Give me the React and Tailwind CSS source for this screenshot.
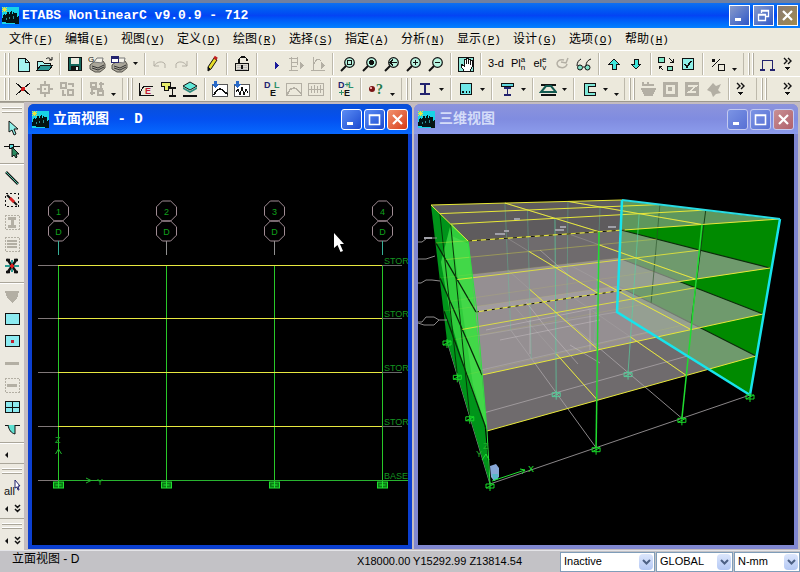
import React from "react";

const menus = [
  ["文件", "F"],
  ["编辑", "E"],
  ["视图", "V"],
  ["定义", "D"],
  ["绘图", "R"],
  ["选择", "S"],
  ["指定", "A"],
  ["分析", "N"],
  ["显示", "P"],
  ["设计", "G"],
  ["选项", "O"],
  ["帮助", "H"],
];

const K = "#111";
const C = "#5fe0d0";
const G = "#b3afa4";
const N = "#23236e";

function Ico({ children, size = 18 }) {
  return (
    <svg width={size} height={size} viewBox="0 0 18 18" fill="none" shapeRendering="crispEdges">
      {children}
    </svg>
  );
}

function Tool({ label, wide, children }) {
  return (
    <button
      aria-label={label}
      className={`${wide ? "w-6 justify-end" : "w-[22px] justify-center"} h-[22px] shrink-0 flex items-center`}
    >
      {children}
    </button>
  );
}

function Sep() {
  return (
    <div className="w-2 h-[22px] shrink-0 flex justify-center">
      <div className="w-0.5 border-l border-[#bdb9ab] bg-white" />
    </div>
  );
}

function Grip() {
  return (
    <div className="w-3 h-[22px] shrink-0 flex gap-0.5 pl-1">
      <div className="w-0.5 border-r border-[#b0ac9f] bg-white" />
      <div className="w-0.5 border-r border-[#b0ac9f] bg-white" />
    </div>
  );
}

function Drop({ low }) {
  return (
    <button aria-label="More" className={`w-[11px] h-[22px] shrink-0 flex justify-center ${low ? "items-end pb-1" : "items-center"}`}>
      <svg width="5" height="3" viewBox="0 0 5 3">
        <path d="M0 0h5L2.5 3z" fill={K} />
      </svg>
    </button>
  );
}

function More() {
  return (
    <button aria-label="More tools" className="w-5 h-[22px] shrink-0 flex items-center justify-center">
      <Ico>
        <path d="M3 3l3 3-3 3M7 3l3 3-3 3" stroke={K} strokeWidth="1.4" shapeRendering="auto" />
        <path d="M4 12h5l-2.500 3z" fill={K} />
      </Ico>
    </button>
  );
}

function Zoom({ children }) {
  return (
    <Ico>
      <path d="M7 11L2 16" stroke={K} strokeWidth="2" shapeRendering="auto" />
      <circle cx="10.500" cy="7.500" r="4.800" fill="#b8f4e0" stroke={K} strokeWidth="1.200" shapeRendering="auto" />
      {children}
    </Ico>
  );
}

function Printer({ children }) {
  return (
    <Ico>
      <path d="M2 10l5-4h8l2 3v4l-5 4H7l-5-3z" fill="#aaa69a" stroke="#55524a" shapeRendering="auto" />
      <path d="M6 7l3-4h6l-1 5z" fill="#f5f3ea" stroke="#777" shapeRendering="auto" />
      <path d="M4 11l6 2 6-3M4 13l6 2 6-3" stroke="#333" shapeRendering="auto" />
      {children}
    </Ico>
  );
}

function DLE({ plus }) {
  return (
    <svg width="20" height="20" viewBox="0 0 20 20" fontFamily="Liberation Sans" fontWeight="700" fontSize="9">
      <text x="2" y="9" fill={N}>D</text>
      <text x="12" y="9" fill="#2f8f6a">L</text>
      <text x="8" y="17" fill={K}>E</text>
      {plus && (
        <path d="M9 5.500h4M11 3.500v4M3 13.500h5M5.500 11v5" stroke="#2f8f6a" />
      )}
    </svg>
  );
}

function AppLogo() {
  return (
    <svg width="17" height="17" viewBox="0 0 17 17" shapeRendering="crispEdges" className="shrink-0">
      <rect width="17" height="17" fill="#19d3e6" />
      <path d="M0 15v-4l1-1V8l2-1v2l2-3V5h2v4l1-4 2-1v4l2-4 1 3v-1h2v4l2-1v8z" fill="#041414" />
      <path d="M2 0v5M0 2h5M0 0l5 5M5 0L0 5" stroke="#e8e040" />
      <path d="M4 11v2M7 10v2M11 9v3" stroke="#2c8f96" />
    </svg>
  );
}

function FileBar() {
  return (
    <div className="h-[26px] flex items-center overflow-hidden border-t border-white">
      <Grip />
      <Tool label="New">
        <Ico><path d="M4 3h7l4 4v9H4z" fill="#a5f3ee" stroke={K} /><path d="M11 3v4h4" stroke={K} /></Ico>
      </Tool>
      <Tool label="Open">
        <Ico>
          <path d="M1 15V6h5l2 2h6v2" fill="#a5f3ee" stroke={K} />
          <path d="M1 15l4-5h12l-4 5z" fill="#2b9a98" stroke={K} />
          <path d="M10 4c2-2 4-1 5 1M13 5h3V2" stroke={K} shapeRendering="auto" />
        </Ico>
      </Tool>
      <Sep />
      <Tool label="Save">
        <Ico>
          <rect x="2.500" y="2.500" width="13" height="13" fill="#14665c" stroke={K} />
          <rect x="5" y="3" width="8" height="6" fill="#eceadf" />
          <rect x="5" y="11" width="8" height="5" fill={K} />
          <rect x="10" y="12" width="2" height="3" fill="#eee" />
        </Ico>
      </Tool>
      <Tool label="Print graphics">
        <Printer><text x="0" y="7" fontSize="8" fontFamily="Liberation Sans" fill={K}>G</text></Printer>
      </Tool>
      <Tool label="Print tables">
        <Printer><path d="M1.500 1.500h7v6h-7z" fill="#fff" stroke={N} /><path d="M1 2.500h8" stroke={N} strokeWidth="2" /></Printer>
      </Tool>
      <Drop />
      <Sep />
      <Tool label="Undo">
        <Ico><path d="M3 6v5h5M3 11c3-5 9-5 11-2v4" stroke={G} shapeRendering="auto" /></Ico>
      </Tool>
      <Tool label="Redo">
        <Ico><path d="M14 6v5H9M14 11c-3-5-9-5-11-2v4" stroke={G} shapeRendering="auto" /></Ico>
      </Tool>
      <Sep />
      <Tool label="Edit">
        <Ico>
          <path d="M5 12l6-9 3 2-6 9-3 2z" fill="#e6dc28" stroke={K} shapeRendering="auto" />
          <path d="M11 2l3 2" stroke="#c02020" strokeWidth="3" shapeRendering="auto" />
          <path d="M5 12v4l3-2z" fill={K} />
        </Ico>
      </Tool>
      <Sep />
      <Tool label="Lock model">
        <Ico>
          <path d="M6 9V4l2-2h4l2 2v2" stroke={K} strokeWidth="1.200" />
          <rect x="2.500" y="8.500" width="13" height="7" fill="#dedbd0" stroke={K} />
          <path d="M4 10.500h10M4 12.500h10M4 14.500h10" stroke="#bbb" />
          <path d="M9 10v4M8 11h2" stroke={K} strokeWidth="1.500" />
        </Ico>
      </Tool>
      <Sep />
      <Tool label="Run analysis" wide>
        <Ico><path d="M8 7l4 3.500-4 3.500z" fill="#1a1a9a" /></Ico>
      </Tool>
      <Tool label="Run sequence">
        <Ico><path d="M4 2v14M10 2v8M2 3h9M4 7h6M4 11h6M2 15h9" stroke={G} /><path d="M13 7l4 3.500-4 3.500z" fill={G} /></Ico>
      </Tool>
      <Tool label="Run static nonlinear">
        <Ico><path d="M4 2v14M2 15h14M4 11c3-8 6-8 8-5" stroke={G} /><path d="M12 7l4 3.500-4 3.500z" fill={G} /></Ico>
      </Tool>
      <Sep />
      <Tool label="Zoom window"><Zoom><rect x="8.500" y="5.500" width="4" height="4" stroke={K} /></Zoom></Tool>
      <Tool label="Restore full view"><Zoom><circle cx="10.500" cy="7.500" r="2.500" fill={K} /></Zoom></Tool>
      <Tool label="Previous zoom"><Zoom><path d="M7 7.500h7M10 4.500l-3 3 3 3" stroke={K} strokeWidth="1.200" /></Zoom></Tool>
      <Tool label="Zoom in"><Zoom><path d="M8 7.500h5M10.500 5v5" stroke={K} strokeWidth="1.500" /></Zoom></Tool>
      <Tool label="Zoom out"><Zoom><path d="M8 7.500h5" stroke={K} strokeWidth="1.500" /></Zoom></Tool>
      <Sep />
      <Tool label="Pan">
        <Ico>
          <rect x="1.500" y="2.500" width="15" height="14" fill="#8ce6d8" stroke={K} />
          <path d="M4 9l3 2V4h2V3h2v1h2v1h2v7l-2 4H7l-3-5z" fill="#fff" stroke={K} />
          <path d="M9 4v5M11 4v5M13 5v5" stroke={K} />
        </Ico>
      </Tool>
      <Sep />
      <Tool label="3-d view"><span className="text-[11px]">3-d</span></Tool>
      <Tool label="Plan view">
        <span className="text-[11px]">Pl</span>
        <span className="flex flex-col text-[8px] leading-[8px]">
          <span>a</span>
          <span>n</span>
        </span>
      </Tool>
      <Tool label="Elevation view">
        <span className="text-[11px]">el</span>
        <span className="flex flex-col text-[8px] leading-[8px]">
          <span>e</span>
          <span>v</span>
        </span>
      </Tool>
      <Tool label="Rotate view">
        <Ico><path d="M14 9a5 4 0 1 1-3-4M15 3l-2 5-5-1" stroke={G} strokeWidth="1.500" shapeRendering="auto" /></Ico>
      </Tool>
      <Tool label="Perspective">
        <Ico>
          <g shapeRendering="auto" stroke={K}>
            <path d="M2 11c0-4 2-6 4-7M11 11c0-4 2-6 5-7M8 12h2" />
            <circle cx="5" cy="12.500" r="2.500" fill="#7fe0c8" />
            <circle cx="12.500" cy="12.500" r="2.500" fill="#7fe0c8" />
          </g>
        </Ico>
      </Tool>
      <Sep />
      <Tool label="Move up"><Ico><path d="M9 4l5 5h-3v5H7V9H4z" fill="#3fe6dc" stroke={K} /></Ico></Tool>
      <Tool label="Move down"><Ico><path d="M9 14l5-5h-3V4H7v5H4z" fill="#3fe6dc" stroke={K} /></Ico></Tool>
      <Sep />
      <Tool label="Shrink objects">
        <Ico>
          <rect x="1.500" y="2.500" width="6" height="5" fill="#7fe8c8" stroke={K} />
          <rect x="10.500" y="11.500" width="5" height="4" fill="#7fe8c8" stroke={K} />
          <path d="M12 3l4 4M16 4v3h-3M2 11l4 4M2 14v-3h3" stroke={K} />
        </Ico>
      </Tool>
      <Tool label="View options">
        <Ico><rect x="3.500" y="3.500" width="11" height="11" fill="#8ff0e8" stroke={K} /><path d="M6 9l2 3 4-6" stroke={K} strokeWidth="1.500" /></Ico>
      </Tool>
      <Sep />
      <Tool label="Assign display">
        <Ico><path d="M3 12l8-8" stroke={K} /><rect x="3" y="4" width="3" height="3" fill={K} /><rect x="9.500" y="9.500" width="6" height="6" stroke={K} /></Ico>
      </Tool>
      <Drop low />
      <div className="w-1 h-[22px] border-r border-[#bdb9ab]" />
      <Grip />
      <Tool label="Frame section"><Ico><path d="M4.500 15V5.500h10V15M2 15h5M12 15h5" stroke={N} strokeWidth="1.300" /></Ico></Tool>
      <div className="flex-1" />
      <More />
    </div>
  );
}

function DefineBar() {
  return (
    <div className="h-[26px] flex items-center overflow-hidden border-t border-white border-b border-b-[#9d998e]">
      <Grip />
      <Tool label="Joint">
        <Ico>
          <path d="M2 3l14 12M16 3L2 15" stroke={K} />
          <circle cx="9" cy="9" r="2" fill="#d01818" />
        </Ico>
      </Tool>
      <Tool label="Joint group"><Ico><rect x="5" y="5" width="8" height="8" stroke={G} strokeWidth="2" /><path d="M9 1v4M9 13v4M1 9h4M13 9h4M8 9h2" stroke={G} strokeWidth="2" /></Ico></Tool>
      <Tool label="Replicate"><Ico><path d="M3 3h5v5H3zM10 10h5v5h-5zM10 4h5v3M5 10v5h3" stroke={G} strokeWidth="1.500" /></Ico></Tool>
      <Sep />
      <Tool label="Align"><Ico><path d="M3 3h5v4H3zM10 11h5v4h-5zM13 2v7M11 4h5M4 9v6M2 13h5M3 9h12" stroke={G} strokeWidth="1.500" /></Ico></Tool>
      <Drop low />
      <div className="w-1 h-[22px] border-r border-[#bdb9ab]" />
      <Grip />
      <Tool label="Material properties">
        <Ico><path d="M2.500 3v12.500H17M3 15c1-6 3-9 6-9h7" stroke={K} /><text x="8" y="14" fontSize="9" fontWeight="700" fontFamily="Liberation Sans" fill="#c01830">E</text></Ico>
      </Tool>
      <Tool label="Frame sections">
        <Ico><path d="M2 2h9v4H9v4H5V6H2z" fill="#e8ee6a" stroke={K} /><path d="M10 8h7M13.500 8v8M10 16h7" stroke={K} strokeWidth="1.500" /></Ico>
      </Tool>
      <Tool label="Wall sections">
        <Ico><path d="M2 6l7-4 7 4-7 4z" fill="#5fe8d8" stroke={K} shapeRendering="auto" /><path d="M2 7v2l7 4 7-4V7l-7 4z" fill="#2c8a7c" shapeRendering="auto" /><path d="M2 15.500h14" stroke={K} strokeWidth="2" /></Ico>
      </Tool>
      <Sep />
      <Tool label="Response spectrum">
        <Ico><rect x="1.500" y="4.500" width="15" height="12" fill="#fff" stroke="#555" /><path d="M3 15c2-4 3-6 6-6s4 4 8 5" stroke={K} strokeWidth="1.500" /><path d="M3 1h3v3h2L4.500 8 1 4h2z" fill="#2a6ac8" /></Ico>
      </Tool>
      <Tool label="Time history">
        <Ico><rect x="1.500" y="4.500" width="15" height="12" fill="#fff" stroke="#555" /><path d="M3 12l2-3 2 6 2-8 2 8 2-6 2 4" stroke={K} /><path d="M3 1h3v3h2L4.500 8 1 4h2z" fill="#2a6ac8" /></Ico>
      </Tool>
      <Sep />
      <Tool label="Static load cases"><DLE /></Tool>
      <Tool label="Spectrum cases"><Ico><rect x="1.500" y="3.500" width="15" height="12" stroke={G} /><path d="M2 15c2-4 3-7 7-7s5 4 8 7" stroke={G} strokeWidth="1.500" /></Ico></Tool>
      <Tool label="Time history cases"><Ico><rect x="1.500" y="3.500" width="15" height="12" stroke={G} /><path d="M2 9.500h14M4 6v7M7 5v8M10 6v7M13 5v8" stroke={G} /></Ico></Tool>
      <Sep />
      <Tool label="Load combinations"><DLE plus /></Tool>
      <Sep />
      <Tool label="Mass source">
        <Ico><circle cx="5" cy="9" r="3" fill="#7a1414" shapeRendering="auto" /><circle cx="4" cy="8" r="1" fill="#f0a0a0" /><text x="9" y="14" fontSize="14" fontWeight="700" fontFamily="Liberation Serif" fill="#1f7a4a">?</text></Ico>
      </Tool>
      <Drop low />
      <div className="w-1 h-[22px] border-r border-[#bdb9ab]" />
      <Grip />
      <Tool label="Steel frame design"><Ico><path d="M4 4h10M4 14h10M9 4v10" stroke={N} strokeWidth="2" /></Ico></Tool>
      <Drop />
      <Sep />
      <Tool label="Concrete frame design">
        <Ico><rect x="3.500" y="3.500" width="11" height="11" fill="#6fe8e8" stroke={K} /><path d="M5 12h2M9 12h1M12 12h1" stroke={K} strokeWidth="1.500" /></Ico>
      </Tool>
      <Drop />
      <Sep />
      <Tool label="Composite beam design"><Ico><rect x="3.500" y="3.500" width="12" height="3" fill="#5fd8e0" stroke={K} /><path d="M6 8h7M9.500 8v7M6 15h7" stroke={N} strokeWidth="1.500" /></Ico></Tool>
      <Drop />
      <Sep />
      <Tool label="Joist design"><Ico><path d="M2 4.500h15M2 14.500h15" stroke={K} strokeWidth="2" /><path d="M2 12l5-6h5l5 6z" stroke="#125a50" strokeWidth="2" shapeRendering="auto" /></Ico></Tool>
      <Drop />
      <Sep />
      <Tool label="Shear wall design"><Ico><path d="M15 3H4v12h11v-3H8V6h7z" fill="#7fe8d8" stroke={K} /></Ico></Tool>
      <Drop />
      <Drop low />
      <div className="w-1 h-[22px] border-r border-[#bdb9ab]" />
      <Grip />
      <Tool label="Assign area"><Ico><path d="M3 9h13l-3 6H6zM5 5h10M4 2v4M9 2v4" fill={G} stroke={G} strokeWidth="1.500" /></Ico></Tool>
      <Tool label="Assign opening"><Ico><rect x="3" y="3" width="12" height="12" stroke={G} strokeWidth="3" /><rect x="7" y="7" width="4" height="4" fill={G} /></Ico></Tool>
      <Tool label="Assign pier"><Ico><rect x="2" y="2" width="14" height="14" fill={G} /><path d="M5 6h8l-7 6h7" stroke="#ece9dc" strokeWidth="1.500" /></Ico></Tool>
      <Tool label="Assign load"><Ico><path d="M2 10l6-7 3 3 5-2-3 6 3 3-5 1-3 3-2-5z" fill={G} shapeRendering="auto" /></Ico></Tool>
      <Sep />
      <div className="flex-1" />
      <More />
      <div className="w-1 h-[22px] border-r border-[#bdb9ab]" />
      <Grip />
      <div className="w-3" />
      <More />
    </div>
  );
}

function SideSep() {
  return <div className="h-1.5 w-full flex items-center"><div className="h-0.5 w-full border-t border-[#aaa69a] bg-white" /></div>;
}

function SideGrip() {
  return (
    <div className="w-full px-0.5 py-1 flex flex-col gap-0.5 border-t border-[#aaa69a]">
      <div className="h-0.5 border-b border-[#aaa69a] bg-white" />
      <div className="h-0.5 border-b border-[#aaa69a] bg-white" />
    </div>
  );
}

function SideMore({ down }) {
  return (
    <button aria-label="More" className="h-[18px] w-full flex items-center">
      <svg width="24" height="12" viewBox="0 0 24 12" fill="none">
        <path d="M8 3v6L5 6z" fill={K} />
        {down && <path d="M15 2l2.500 2.500L20 2M15 6l2.500 2.500L20 6" stroke={K} strokeWidth="1.500" />}
      </svg>
    </button>
  );
}

function SideBar() {
  return (
    <div className="w-6 shrink-0 flex flex-col items-center overflow-hidden bg-[#ece9e0]">
      <SideGrip />
      <Tool label="Pointer"><Ico><path d="M6 2v11l3-2 2 5 2-1-2-5h4z" fill="#8ff0e8" stroke={K} shapeRendering="auto" /></Ico></Tool>
      <Tool label="Reshape"><Ico><path d="M1 5.500h16" stroke={K} strokeWidth="1.500" /><rect x="6.500" y="3.500" width="4" height="4" fill="#5fe0e0" stroke={K} /><path d="M9 6v10l2-2 2 3 1-1-1-3h3z" fill="#2a8a60" stroke={K} shapeRendering="auto" /></Ico></Tool>
      <SideSep />
      <Tool label="Draw line"><Ico><path d="M3 3l12 12" stroke={K} strokeWidth="2.600" shapeRendering="auto" /><path d="M3 3l12 12" stroke="#4fc8a8" shapeRendering="auto" /></Ico></Tool>
      <Tool label="Quick line"><Ico><rect x="2.500" y="2.500" width="13" height="13" stroke={K} strokeDasharray="2 2" /><path d="M4 4l10 10" stroke={K} strokeWidth="2" shapeRendering="auto" /><path d="M7 7l4 4" stroke="#e02020" strokeWidth="3" shapeRendering="auto" /></Ico></Tool>
      <Tool label="Quick column"><Ico><rect x="2" y="2" width="14" height="14" stroke={G} strokeDasharray="2 1" /><path d="M5 5h8M5 13h8M9 5v8" stroke={G} strokeWidth="3" /></Ico></Tool>
      <Tool label="Quick secondary beam"><Ico><rect x="2" y="2" width="14" height="14" stroke={G} strokeDasharray="2 1" /><path d="M4 6h10M4 9h10M4 12h10" stroke={G} strokeWidth="1.500" /></Ico></Tool>
      <Tool label="Braces"><Ico><path d="M4 2l10 14M14 2L4 16M3 3h4M11 3h4M3 15h4M11 15h4" stroke={K} strokeWidth="2.400" shapeRendering="auto" /><path d="M2 9h5M11 9h5M9 3v3M9 12v3" stroke="#2a9a90" strokeWidth="1.500" /><circle cx="9" cy="9" r="1.800" fill="#e02020" /></Ico></Tool>
      <div className="h-1" />
      <SideSep />
      <Tool label="Draw area"><Ico><path d="M2 3h14l-2 8-5 4-5-5z" fill={G} /></Ico></Tool>
      <Tool label="Draw rectangle"><Ico><rect x="2.500" y="3.500" width="14" height="11" fill="#8ceaf0" stroke={K} /></Ico></Tool>
      <Tool label="Quick area"><Ico><rect x="2.500" y="3.500" width="14" height="11" fill="#8ceaf0" stroke={K} /><rect x="8" y="8" width="3" height="3" fill="#c02030" /></Ico></Tool>
      <Tool label="Draw wall"><Ico><path d="M2 9.500h14" stroke={G} strokeWidth="3" /></Ico></Tool>
      <Tool label="Quick wall"><Ico><rect x="2" y="2" width="14" height="14" stroke={G} strokeDasharray="2 1" /><path d="M4 9.500h10" stroke={G} strokeWidth="3" /></Ico></Tool>
      <Tool label="Window"><Ico><rect x="2.500" y="3.500" width="14" height="11" fill="#8ceaf0" stroke={K} /><path d="M9.500 3v12M2 9.500h14" stroke={K} /></Ico></Tool>
      <Tool label="Develop elevation"><Ico><path d="M2 5.500h15" stroke={K} /><path d="M5 5c1 5 3 8 7 9V5" fill={C} stroke={K} shapeRendering="auto" /></Ico></Tool>
      <SideSep />
      <SideMore />
      <SideGrip />
      <Tool label="Select all">
        <svg width="20" height="20" viewBox="0 0 20 20" className="shrink-0">
          <text x="2" y="16" fontSize="11" fontFamily="Liberation Sans" fill={K}>all</text>
          <path d="M13 1v8l2-1 1 3h1l-1-4h2z" fill="#fff" stroke={N} />
        </svg>
      </Tool>
      <SideMore down />
      <SideGrip />
      <div className="flex-1" />
      <SideMore down />
    </div>
  );
}

function WinButton({ kind, active, main }) {
  const look = main
    ? kind === "close"
      ? "bg-linear-to-br from-[#8a7a72] to-[#a08a4c] border-white"
      : "bg-linear-to-br from-[#8a9ac8] to-[#2f55c8] border-white"
    : kind === "close"
      ? active
        ? "bg-linear-to-br from-[#f0906c] to-[#d8380c] border-white rounded-[3px]"
        : "bg-linear-to-br from-[#c89094] to-[#b0606c] border-[#c4caf0] rounded-[3px]"
      : active
        ? "bg-linear-to-br from-[#5c8cf4] to-[#1c48d0] border-white rounded-[3px]"
        : "bg-linear-to-br from-[#7c94e4] to-[#5870d4] border-[#c4caf0] rounded-[3px]";
  return (
    <button aria-label={kind} className={`size-[21px] shrink-0 border flex items-center justify-center ${look}`}>
      <svg width="15" height="15" viewBox="0 0 15 15" fill="none" stroke="#fff">
        {kind === "min" && <path d="M3 11.500h6" strokeWidth="3" />}
        {kind === "max" && <path d="M2.500 3h10v9.500h-10zM2 3.500h11" strokeWidth="1.600" />}
        {kind === "restore" && <path d="M5.500 5V2.500h7v6H10M2.500 6.500h7v6h-7zM2 7h8M5 3h8" strokeWidth="1.300" />}
        {kind === "close" && <path d="M3 3l9 9M12 3l-9 9" strokeWidth="2.200" />}
      </svg>
    </button>
  );
}

function ChildWindow({ title, active, children }) {
  return (
    <section
      className={`flex-1 min-w-0 flex flex-col rounded-t-md overflow-hidden ${active ? "bg-[#0b3fd0]" : "bg-[#8087d0]"}`}
    >
      <header
        className={`h-[30px] shrink-0 flex items-center gap-1 px-1 ${
          active
            ? "bg-linear-to-b from-[#0a50d8] via-[#0450f0] to-[#0868ff]"
            : "bg-linear-to-b from-[#8c94dc] via-[#808ce0] to-[#8c9cec]"
        }`}
      >
        <AppLogo />
        <h2
          className={`flex-1 truncate text-sm font-bold font-['Liberation_Mono','Noto_Sans_CJK_SC',monospace] ${
            active ? "text-white" : "text-[#d4dcf8]"
          }`}
        >
          {title}
        </h2>
        <div className="flex gap-0.5">
          <WinButton kind="min" active={active} />
          <WinButton kind="max" active={active} />
          <WinButton kind="close" active={active} />
        </div>
      </header>
      <div className="flex-1 min-h-0 mx-1 mb-1 bg-black overflow-hidden">{children}</div>
    </section>
  );
}

const gridX = [58.5, 166.5, 274.5, 382.5];
const storyY = [265.5, 318.5, 372.5, 426.5];

function octagon(cx, cy, r) {
  const k = r * 0.42;
  return [
    [cx - k, cy - r], [cx + k, cy - r], [cx + r, cy - k], [cx + r, cy + k],
    [cx + k, cy + r], [cx - k, cy + r], [cx - r, cy + k], [cx - r, cy - k],
  ].join(" ");
}

function ElevationView() {
  return (
    <svg
      className="block w-full h-full"
      viewBox="32 134 376 411"
      preserveAspectRatio="xMinYMin slice"
      fontFamily="Liberation Sans"
      fontSize="9"
      fill="none"
    >
      {gridX.map((x, i) => (
        <g key={x}>
          <polygon points={octagon(x, 211, 10)} stroke="#a08c94" />
          <polygon points={octagon(x, 231, 10)} stroke="#a08c94" />
          <text x={x} y="215" textAnchor="middle" fill="#10a01c">{i + 1}</text>
          <text x={x} y="235" textAnchor="middle" fill="#10a01c">D</text>
          <path d={`M${x} 241V255`} stroke={i % 3 ? "#909090" : "#38b098"} />
          <path d={`M${x} 265V482`} stroke="#28c828" />
          <rect x={x - 5} y="482" width="10" height="6" fill="#0a7a14" stroke="#20e030" />
          <path d={`M${x} 482v6M${x - 3} 485h6`} stroke="#20e030" />
        </g>
      ))}
      {storyY.map((y) => (
        <g key={y}>
          <path d={`M38 ${y}H58`} stroke="#807878" />
          <path d={`M382 ${y}H402`} stroke="#686868" />
          <path d={`M58 ${y}H382`} stroke="#e8e840" />
          <text x="384" y={y - 1.5} fill="#149420">STOR</text>
        </g>
      ))}
      <path d="M38 480.500H58" stroke="#807878" />
      <path d="M58 480.500H408" stroke="#28b430" />
      <text x="384" y="479" fill="#149420">BASE</text>
      <text x="55" y="443" fill="#18a424">Z</text>
      <path d="M55.500 454l3-5 3 5M86 478l5 2.500-5 2.500" stroke="#20b82c" />
      <text x="97" y="485" fill="#18a424">Y</text>
      <path d="M334 233v15l3.500-3 3 7 2.500-1-3-7h4z" fill="#fff" />
    </svg>
  );
}

// floor corners from roof to base: back-left, front-left, front-right, back-right
const floors = [
  [[431, 205], [468, 241], [780, 219], [622, 200]],
  [[436, 243], [476, 312], [770, 268], [621, 230]],
  [[440, 278], [482, 375], [763, 314], [619, 258]],
  [[444, 311], [487, 431], [756, 356], [618, 286]],
  [[447, 341], [490, 484], [750, 395], [617, 312]],
];
const depth = [0, 0.24, 0.53, 1];
const span = [0, 0.387, 0.717, 1];
const idx = [0, 1, 2, 3];

const lerp = (a, b, t) => [a[0] + (b[0] - a[0]) * t, a[1] + (b[1] - a[1]) * t];

function node(level, i, j) {
  const [bl, fl, fr, br] = floors[level];
  const t = i === 0 || i === 3 ? span[i] : span[i] + j * 0.011 - level * 0.003;
  return lerp(lerp(bl, fl, depth[j]), lerp(br, fr, depth[j]), t);
}

function Seg({ a, b, ...rest }) {
  return <line x1={a[0]} y1={a[1]} x2={b[0]} y2={b[1]} {...rest} />;
}

function Footing({ at, color = "#18d828" }) {
  const [x, y] = at;
  return <path d={`M${x - 4} ${y}h8v4h-8zM${x - 4} ${y + 4}l8-4M${x} ${y - 2}v9`} stroke={color} />;
}

function ModelView() {
  return (
    <svg
      className="block w-full h-full"
      viewBox="418 134 376 411"
      preserveAspectRatio="xMinYMin slice"
      fontFamily="Liberation Sans"
      fontSize="9"
      fill="none"
    >
      <polygon points="622,200 780,219 750,395 617,312" fill="#008a00" />
      {idx.map((i) => (
        <Seg key={i} a={node(4, i, 0)} b={node(4, i, 3)} stroke="#8a8688" />
      ))}
      {idx.map((j) => (
        <Seg key={j} a={node(4, 0, j)} b={node(4, 3, j)} stroke="#8a8688" />
      ))}
      {[3, 2, 1, 0].map((l) => (
        <g key={l}>
          <polygon points={floors[l].join(" ")} fill="#a8a2a5" fillOpacity={l === 0 ? 0.56 : 0.66} />
          {[0, 1, 2].map((i) => (
            <Seg key={i} a={node(l, i, 0)} b={node(l, i, 3)} stroke="#c4c0bc" strokeOpacity=".3" />
          ))}
          <Seg a={node(l, 3, 0)} b={node(l, 3, 3)} stroke="#0c2c0c" strokeWidth="1.200" />
        </g>
      ))}
      {/* interior columns */}
      {idx.slice(1, 3).map((i) =>
        idx.slice(0, 3).map((j) => (
          <Seg key={`${i}${j}`} a={node(0, i, j)} b={node(4, i, j)} stroke="#58d0a0" strokeOpacity={j === 2 ? 0.7 : 0.35} />
        ))
      )}
      <Seg a={node(0, 3, 1)} b={node(3, 3, 1)} stroke="#285028" strokeOpacity=".6" />
      <Seg a={node(0, 3, 2)} b={node(3, 3, 2)} stroke="#184018" />
      <path d="M526 302l22 28 30 34M530 320v34M540 250l34 30M500 340l100-20M486 330l110-22M590 310v40M570 345l30 18" stroke="#c8c0c4" strokeOpacity=".5" />
      <Footing at={node(4, 1, 2)} color="#58c898" />
      <Footing at={node(4, 2, 2)} color="#58c898" />
      {/* left wall */}
      <polygon points="431,205 468,241 490,484 447,341" fill="#00941a" />
      <polygon points="451,223 468,241 487,431 465,372 452,325 441,262" fill="#30cc3c" />
      <polygon points="452,236 469,244 487,431 473,385" fill="#42d848" />
      {[1, 2, 3].map((l) => (
        <Seg key={l} a={node(l, 0, 0)} b={node(l, 0, 3)} stroke="#062806" strokeWidth="1.300" />
      ))}
      {[1, 2].map((j) => (
        <Seg key={j} a={node(0, 0, j)} b={node(4, 0, j)} stroke="#083808" />
      ))}
      {/* beams */}
      {idx.map((l) => (
        <g key={l} stroke="#e8e838">
          {idx.map((j) => (
            <Seg key={j} a={node(l, 0, j)} b={node(l, 3, j)} strokeOpacity={l === 0 || j === 3 ? 1 : j === 2 && l < 3 ? 0.85 : l === 1 ? 0.35 : 0.12} />
          ))}
          {[1, 2].map((i) => (
            <Seg key={i} a={node(l, i, l === 0 ? 0 : l === 3 ? 2 : 1)} b={node(l, i, 3)} />
          ))}
        </g>
      ))}
      <Seg a={floors[0][1]} b={[625, 230]} stroke="#101010" strokeDasharray="4 5" />
      <Seg a={floors[1][1]} b={[625, 290]} stroke="#101010" strokeDasharray="3 5" />
      <Seg a={floors[0][0]} b={floors[0][1]} stroke="#e8e838" />
      {[1, 2].map((i) => (
        <Seg key={i} a={node(0, i, 3)} b={node(4, i, 3)} stroke="#20dc30" strokeWidth="1.500" />
      ))}
      <path d="M468 241L477 312 487 431 490 484" stroke="#30e040" />
      {/* selected wall */}
      <path d="M622 200L780 219" stroke="#28dce4" strokeWidth="2" />
      <path d="M780 219L750 395 617 312 622 200" stroke="#18e4ec" strokeWidth="2.500" />
      {idx.map((j) => (
        <Footing key={j} at={node(4, 0, j)} />
      ))}
      {[1, 2, 3].map((i) => (
        <Footing key={i} at={node(4, i, 3)} />
      ))}
      {/* grid bubbles */}
      <path
        d="M418 322h4l4-5h8l5 3-5 5h-10l-6-2M418 283h3l5-3h6l8 1M418 259h8l9-3M418 242h4l5-4h10M439 320h8"
        stroke="#8c8a8a"
      />
      <path d="M424 238h8M495 234h10M504 231h5M555 230h9M560 227h6M608 227h8M514 219h6" stroke="#a0a0a8" strokeWidth="2" />
      <path d="M490 466l6-2 3 4v9l-5 4-3-4z" fill="#88a8d8" />
      <path d="M492 474h6v5l-4 2z" fill="#58b8c8" />
      <path d="M492 481l33-11M520 469l5 1-3 4M482 460l4-6 3 6" stroke="#20e030" />
      <text x="528" y="472" fill="#20e030">X</text>
      <text x="476" y="457" fill="#20b028">Y</text>
      <text x="483" y="449" fill="#20b028">Z</text>
    </svg>
  );
}

function Picker({ label, value, options, width }) {
  return (
    <div className={`relative h-5 ${width}`}>
      <select
        aria-label={label}
        defaultValue={value}
        className="block appearance-none w-full h-full pl-[3px] bg-white border border-[#7f9db9] text-[11px] text-black"
      >
        {options.map((o) => (
          <option key={o}>{o}</option>
        ))}
      </select>
      <span className="absolute right-0.5 inset-y-0.5 w-3.5 pointer-events-none flex items-center justify-center rounded-sm bg-linear-to-b from-[#dce6fc] to-[#b4c8f4]">
        <svg width="9" height="6" viewBox="0 0 9 6" fill="none">
          <path d="M1 1l3.500 3.500L8 1" stroke="#4d6185" strokeWidth="2" />
        </svg>
      </span>
    </div>
  );
}

export default function App() {
  return (
    <div className="h-screen flex flex-col overflow-hidden bg-[#ece9dc] text-black font-['Liberation_Sans','Noto_Sans_CJK_SC',sans-serif]">
      <header className="h-7 shrink-0 border-t-3 border-[#7080a0] flex items-center gap-[3px] pl-0.5 pr-0.5 bg-linear-to-b from-[#1070f0] via-[#0444f4] to-[#0880ff]">
        <AppLogo />
        <h1 className="flex-1 truncate text-[13px] font-bold text-white font-['Liberation_Mono',monospace]">
          ETABS NonlinearC v9.0.9 - 712
        </h1>
        <WinButton kind="min" main />
        <WinButton kind="restore" main />
        <WinButton kind="close" main />
      </header>

      <nav className="h-[22px] shrink-0 flex items-center pl-[9px] overflow-hidden">
        {menus.map(([name, key]) => (
          <button key={key} className="w-14 shrink-0 text-left text-xs whitespace-nowrap">
            {name}
            <span className="text-[11px] font-['Liberation_Mono',monospace]">
              (<u>{key}</u>)
            </span>
          </button>
        ))}
      </nav>

      <div className="shrink-0">
        <FileBar />
        <DefineBar />
      </div>

      <main className="flex-1 min-h-0 flex bg-[#c4bcc0]">
        <SideBar />
        <div className="flex-1 min-w-0 flex gap-0.5 pl-1 pr-0.5 pt-0.5 pb-px">
          <ChildWindow title="立面视图 - D" active>
            <ElevationView />
          </ChildWindow>
          <ChildWindow title="三维视图">
            <ModelView />
          </ChildWindow>
        </div>
      </main>

      <footer className="h-[22px] shrink-0 flex items-center bg-[#c3c2c6] border-t border-[#e4e4e8]">
        <span className="flex-1 pl-3 pb-1.5 text-xs">立面视图 - D</span>
        <span className="text-[11px] pr-[38px]">X18000.00 Y15292.99 Z13814.54</span>
        <div className="flex gap-px">
          <Picker label="Animation" value="Inactive" options={["Inactive"]} width="w-[95px]" />
          <Picker label="Coordinate system" value="GLOBAL" options={["GLOBAL"]} width="w-[77px]" />
          <Picker label="Units" value="N-mm" options={["N-mm", "kN-m"]} width="w-[66px]" />
        </div>
      </footer>
    </div>
  );
}
